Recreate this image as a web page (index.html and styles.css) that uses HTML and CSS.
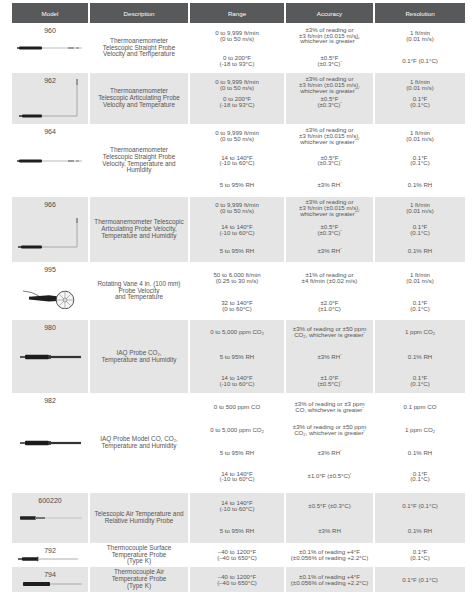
FILE: index.html
```html
<!DOCTYPE html>
<html lang="en">
<head>
<meta charset="utf-8">
<title>Probe specifications</title>
<link rel="stylesheet" href="styles.css">
</head>
<body>
<div class="table">
  <div class="row head">
    <div class="c">Model</div>
    <div class="c">Description</div>
    <div class="c">Range</div>
    <div class="c">Accuracy</div>
    <div class="c">Resolution</div>
  </div>

  <div class="row r960">
    <div class="c model"><span class="num">960</span>
      <svg class="probe" width="66" height="6" viewBox="0 0 66 6"><rect x="0" y="2.3" width="3" height="1.4" fill="#222"/><rect x="2" y="1.4" width="23" height="3.2" rx="1" fill="#1e1e1e"/><line x1="25" y1="3" x2="65" y2="3" stroke="#aaa" stroke-width="0.8"/><line x1="51" y1="3" x2="57" y2="3" stroke="#777" stroke-width="1.3"/><line x1="59" y1="3" x2="62" y2="3" stroke="#888" stroke-width="1.1"/></svg>
    </div>
    <div class="c desc"><span>Thermoanemometer<br>Telescopic Straight Probe<br>Velocity and Temperature</span></div>
    <div class="c data"><div class="sub"><span>0 to 9,999 ft/min<br>(0 to 50 m/s)</span></div><div class="sub"><span>0 to 200°F<br>(-18 to 93°C)</span></div></div>
    <div class="c data"><div class="sub"><span>±3% of reading or<br>±3 ft/min (±0.015 m/s),<br>whichever is greater<sup>***</sup></span></div><div class="sub"><span>±0.5°F<br>(±0.3°C)<sup>*</sup></span></div></div>
    <div class="c data"><div class="sub"><span>1 ft/min<br>(0.01 m/s)</span></div><div class="sub"><span>0.1°F (0.1°C)</span></div></div>
  </div>

  <div class="row alt r962">
    <div class="c model"><span class="num">962</span>
      <svg class="probe" width="64" height="40" viewBox="0 0 64 40"><line x1="59" y1="0" x2="59" y2="37" stroke="#999" stroke-width="0.8"/><line x1="59" y1="0" x2="59" y2="6" stroke="#666" stroke-width="1"/><line x1="24" y1="37" x2="59" y2="37" stroke="#999" stroke-width="0.8"/><rect x="1" y="36.3" width="4" height="1.4" fill="#222"/><rect x="4" y="35.4" width="20" height="3.2" rx="1" fill="#1e1e1e"/></svg>
    </div>
    <div class="c desc"><span>Thermoanemometer<br>Telescopic Articulating Probe<br>Velocity and Temperature</span></div>
    <div class="c data"><div class="sub"><span>0 to 9,999 ft/min<br>(0 to 50 m/s)</span></div><div class="sub"><span>0 to 200°F<br>(-18 to 93°C)</span></div></div>
    <div class="c data"><div class="sub"><span>±3% of reading or<br>±3 ft/min (±0.015 m/s),<br>whichever is greater<sup>***</sup></span></div><div class="sub"><span>±0.5°F<br>(±0.3°C)<sup>*</sup></span></div></div>
    <div class="c data"><div class="sub"><span>1 ft/min<br>(0.01 m/s)</span></div><div class="sub"><span>0.1°F<br>(0.1°C)</span></div></div>
  </div>

  <div class="row r964">
    <div class="c model"><span class="num">964</span>
      <svg class="probe" width="66" height="6" viewBox="0 0 66 6"><rect x="0" y="2.3" width="3" height="1.4" fill="#222"/><rect x="2" y="1.4" width="23" height="3.2" rx="1" fill="#1e1e1e"/><line x1="25" y1="3" x2="65" y2="3" stroke="#aaa" stroke-width="0.8"/><line x1="51" y1="3" x2="57" y2="3" stroke="#777" stroke-width="1.3"/><line x1="59" y1="3" x2="62" y2="3" stroke="#888" stroke-width="1.1"/></svg>
    </div>
    <div class="c desc"><span>Thermoanemometer<br>Telescopic Straight Probe<br>Velocity, Temperature and<br>Humidity</span></div>
    <div class="c data"><div class="sub"><span>0 to 9,999 ft/min<br>(0 to 50 m/s)</span></div><div class="sub"><span>14 to 140°F<br>(-10 to 60°C)</span></div><div class="sub"><span>5 to 95% RH</span></div></div>
    <div class="c data"><div class="sub"><span>±3% of reading or<br>±3 ft/min (±0.015 m/s),<br>whichever is greater<sup>***</sup></span></div><div class="sub"><span>±0.5°F<br>(±0.3°C)<sup>*</sup></span></div><div class="sub"><span>±3% RH<sup>*</sup></span></div></div>
    <div class="c data"><div class="sub"><span>1 ft/min<br>(0.01 m/s)</span></div><div class="sub"><span>0.1°F<br>(0.1°C)</span></div><div class="sub"><span>0.1% RH</span></div></div>
  </div>

  <div class="row alt r966">
    <div class="c model"><span class="num">966</span>
      <svg class="probe lshape" width="64" height="32" viewBox="0 0 64 32"><line x1="59" y1="0" x2="59" y2="29" stroke="#999" stroke-width="0.8"/><line x1="59" y1="0" x2="59" y2="5" stroke="#666" stroke-width="1"/><line x1="24" y1="29" x2="59" y2="29" stroke="#999" stroke-width="0.8"/><rect x="0" y="28.3" width="4" height="1.4" fill="#222"/><rect x="3" y="27.4" width="21" height="3.2" rx="1" fill="#1e1e1e"/></svg>
    </div>
    <div class="c desc"><span>Thermoanemometer Telescopic<br>Articulating Probe Velocity,<br>Temperature and Humidity</span></div>
    <div class="c data"><div class="sub"><span>0 to 9,999 ft/min<br>(0 to 50 m/s)</span></div><div class="sub"><span>14 to 140°F<br>(-10 to 60°C)</span></div><div class="sub"><span>5 to 95% RH</span></div></div>
    <div class="c data"><div class="sub"><span>±3% of reading or<br>±3 ft/min (±0.015 m/s),<br>whichever is greater<sup>***</sup></span></div><div class="sub"><span>±0.5°F<br>(±0.3°C)<sup>*</sup></span></div><div class="sub"><span>±3% RH<sup>*</sup></span></div></div>
    <div class="c data"><div class="sub"><span>1 ft/min<br>(0.01 m/s)</span></div><div class="sub"><span>0.1°F<br>(0.1°C)</span></div><div class="sub"><span>0.1% RH</span></div></div>
  </div>

  <div class="row r995">
    <div class="c model"><span class="num">995</span>
      <svg class="probe vane" width="60" height="30" viewBox="0 0 60 30">
        <path d="M3 12 Q12 12.5 19 17" fill="none" stroke="#444" stroke-width="0.7"/>
        <path d="M9 17.8 L29 16.2 L37 17.2 L37 22 L29 22.6 L9 20.4 Z" fill="#1e1e1e"/>
        <circle cx="45" cy="21" r="8.8" fill="#f5f5f5" stroke="#444" stroke-width="0.9"/>
        <g stroke="#8a8a8a" stroke-width="0.6">
          <line x1="45" y1="13" x2="45" y2="29"/><line x1="37" y1="21" x2="53" y2="21"/>
          <line x1="39.3" y1="15.3" x2="50.7" y2="26.7"/><line x1="50.7" y1="15.3" x2="39.3" y2="26.7"/>
        </g>
        <circle cx="45" cy="21" r="2" fill="#ddd" stroke="#666" stroke-width="0.5"/>
      </svg>
    </div>
    <div class="c desc"><span>Rotating Vane 4 in. (100 mm)<br>Probe Velocity<br>and Temperature</span></div>
    <div class="c data"><div class="sub"><span>50 to 6,000 ft/min<br>(0.25 to 30 m/s)</span></div><div class="sub"><span>32 to 140°F<br>(0 to 60°C)</span></div></div>
    <div class="c data"><div class="sub"><span>±1% of reading or<br>±4 ft/min (±0.02 m/s)</span></div><div class="sub"><span>±2.0°F<br>(±1.0°C)</span></div></div>
    <div class="c data"><div class="sub"><span>1 ft/min<br>(0.01 m/s)</span></div><div class="sub"><span>0.1°F<br>(0.1°C)</span></div></div>
  </div>

  <div class="row alt r980">
    <div class="c model"><span class="num">980</span>
      <svg class="probe" width="64" height="6" viewBox="0 0 64 6"><rect x="2" y="2.2" width="6" height="1.6" fill="#333"/><rect x="7" y="0.8" width="24" height="4.4" rx="1" fill="#1c1c1c"/><rect x="30" y="1.2" width="3" height="3.6" fill="#333"/><rect x="33" y="1.9" width="30" height="2.2" fill="#333"/></svg>
    </div>
    <div class="c desc"><span>IAQ Probe CO<sub>2</sub>,<br>Temperature and Humidity</span></div>
    <div class="c data"><div class="sub"><span>0 to 5,000 ppm CO<sub>2</sub></span></div><div class="sub"><span>5 to 95% RH</span></div><div class="sub"><span>14 to 140°F<br>(-10 to 60°C)</span></div></div>
    <div class="c data"><div class="sub"><span>±3% of reading or ±50 ppm<br>CO<sub>2</sub>, whichever is greater<sup>*</sup></span></div><div class="sub"><span>±3% RH<sup>*</sup></span></div><div class="sub"><span>±1.0°F<br>(±0.5°C)<sup>*</sup></span></div></div>
    <div class="c data"><div class="sub"><span>1 ppm CO<sub>2</sub></span></div><div class="sub"><span>0.1% RH</span></div><div class="sub"><span>0.1°F<br>(0.1°C)</span></div></div>
  </div>

  <div class="row r982">
    <div class="c model"><span class="num">982</span>
      <svg class="probe" width="64" height="6" viewBox="0 0 64 6"><rect x="2" y="2.2" width="6" height="1.6" fill="#333"/><rect x="7" y="0.8" width="24" height="4.4" rx="1" fill="#1c1c1c"/><rect x="30" y="1.2" width="3" height="3.6" fill="#333"/><rect x="33" y="1.9" width="30" height="2.2" fill="#333"/></svg>
    </div>
    <div class="c desc"><span>IAQ Probe Model CO, CO<sub>2</sub>,<br>Temperature and Humidity</span></div>
    <div class="c data"><div class="sub"><span>0 to 500 ppm CO</span></div><div class="sub"><span>0 to 5,000 ppm CO<sub>2</sub></span></div><div class="sub"><span>5 to 95% RH</span></div><div class="sub"><span>14 to 140°F<br>(-10 to 60°C)</span></div></div>
    <div class="c data"><div class="sub"><span>±3% of reading or ±3 ppm<br>CO, whichever is greater<sup>*</sup></span></div><div class="sub"><span>±3% of reading or ±50 ppm<br>CO<sub>2</sub>, whichever is greater<sup>*</sup></span></div><div class="sub"><span>±3% RH<sup>*</sup></span></div><div class="sub"><span>±1.0°F (±0.5°C)<sup>*</sup></span></div></div>
    <div class="c data"><div class="sub"><span>0.1 ppm CO</span></div><div class="sub"><span>1 ppm CO<sub>2</sub></span></div><div class="sub"><span>0.1% RH</span></div><div class="sub"><span>0.1°F<br>(0.1°C)</span></div></div>
  </div>

  <div class="row alt r600220">
    <div class="c model"><span class="num">600220</span>
      <svg class="probe" width="64" height="6" viewBox="0 0 64 6"><rect x="2" y="1.2" width="16" height="3.6" rx="0.8" fill="#222"/><rect x="17" y="2" width="10" height="2" fill="#777"/><line x1="27" y1="3" x2="64" y2="3" stroke="#bbb" stroke-width="0.8"/></svg>
    </div>
    <div class="c desc"><span>Telescopic Air Temperature and<br>Relative Humidity Probe</span></div>
    <div class="c data"><div class="sub"><span>14 to 140°F<br>(-10 to 60°C)</span></div><div class="sub"><span>5 to 95% RH</span></div></div>
    <div class="c data"><div class="sub"><span>±0.5°F (±0.3°C)</span></div><div class="sub"><span>±3% RH</span></div></div>
    <div class="c data"><div class="sub"><span>0.1°F (0.1°C)</span></div><div class="sub"><span>0.1% RH</span></div></div>
  </div>

  <div class="row r792">
    <div class="c model"><span class="num">792</span>
      <svg class="probe low" width="64" height="6" viewBox="0 0 64 6"><rect x="0" y="2.3" width="5" height="1.4" fill="#222"/><rect x="4" y="1.3" width="16" height="3.4" rx="0.8" fill="#1e1e1e"/><rect x="19" y="0.8" width="1.4" height="4.4" fill="#333"/><line x1="20" y1="3" x2="60" y2="3" stroke="#999" stroke-width="0.8"/></svg>
    </div>
    <div class="c desc"><span>Thermocouple Surface<br>Temperature Probe<br>(Type K)</span></div>
    <div class="c data"><div class="sub"><span>–40 to 1200°F<br>(–40 to 650°C)</span></div></div>
    <div class="c data"><div class="sub"><span>±0.1% of reading +4°F<br>(±0.056% of reading +2.2°C)</span></div></div>
    <div class="c data"><div class="sub"><span>0.1°F<br>(0.1°C)</span></div></div>
  </div>

  <div class="row alt r794">
    <div class="c model"><span class="num">794</span>
      <svg class="probe low" width="64" height="6" viewBox="0 0 64 6"><rect x="5" y="0.9" width="27" height="4.2" rx="0.8" fill="#1e1e1e"/><line x1="32" y1="3" x2="64" y2="3" stroke="#999" stroke-width="0.8"/></svg>
    </div>
    <div class="c desc"><span>Thermocouple Air<br>Temperature Probe<br>(Type K)</span></div>
    <div class="c data"><div class="sub"><span>–40 to 1200°F<br>(–40 to 650°C)</span></div></div>
    <div class="c data"><div class="sub"><span>±0.1% of reading +4°F<br>(±0.056% of reading +2.2°C)</span></div></div>
    <div class="c data"><div class="sub"><span>0.1°F (0.1°C)</span></div></div>
  </div>
</div>
</body>
</html>
```

FILE: styles.css
```css
* { box-sizing: border-box; }

body {
  margin: 0;
  background: #ffffff;
  color: #555555;
  font-family: "Liberation Sans", Arial, sans-serif;
}

.table {
  margin: 3px 0 0 12px;
  width: 453px;
}

.row {
  display: grid;
  grid-template-columns: 76px 98px 94px 87px 90px;
  column-gap: 2px;
}

.head { height: 20px; }

.head .c {
  background: #57595b;
  color: #ffffff;
  font-size: 6.2px;
  display: flex;
  align-items: center;
  justify-content: center;
}

.alt .c { background: #e5e5e5; }

.model {
  display: grid;
  justify-items: center;
  align-items: center;
}

.num {
  grid-area: 1 / 1;
  align-self: start;
  padding-top: 4px;
  font-size: 7px;
  line-height: 7px;
  color: #4a4a4a;
}

.probe { grid-area: 1 / 1; display: block; }
.lshape { margin-top: 8px; }
.vane { margin-top: 6px; }
.low { margin-top: 8px; }

.desc {
  display: flex;
  align-items: center;
  justify-content: center;
  text-align: center;
  font-size: 6.4px;
  line-height: 6.8px;
}

.data {
  display: flex;
  flex-direction: column;
  text-align: center;
  font-size: 6.1px;
  line-height: 5.8px;
}

.sub {
  flex: 1;
  display: flex;
  align-items: center;
  justify-content: center;
}

sup {
  font-size: 3.5px;
  line-height: 0;
  vertical-align: 2px;
}

sub {
  font-size: 4px;
  line-height: 0;
  vertical-align: -1px;
}

.r960 { height: 50px; }
.r962 { height: 51px; }
.r962 .data { padding: 3px 0 13px; }
.r964 { height: 73px; }
.r966 { height: 65px; }
.r995 { height: 58px; }
.r995 .data { padding-top: 2px; }
.r980 { height: 73px; }
.r982 { height: 100px; }
.r982 .data { padding: 2px 0 5px; }
.r600220 { height: 50px; }
.r792 { height: 24px; }
.r794 { height: 25px; }
```
